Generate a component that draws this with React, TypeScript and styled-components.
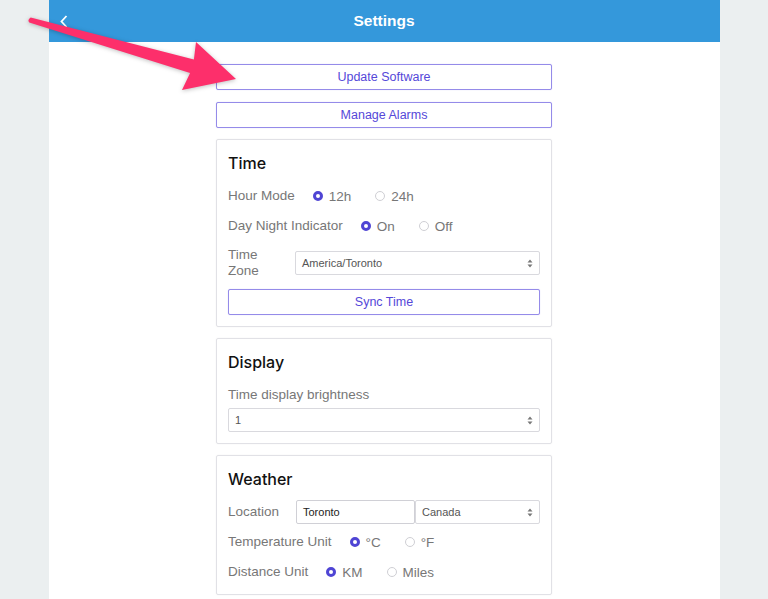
import styled, { createGlobalStyle } from 'styled-components';

const GlobalStyle = createGlobalStyle`
  html, body {
    margin: 0;
    padding: 0;
    background: #ebeff0;
    font-family: "Liberation Sans", Arial, sans-serif;
  }
`;

const Page = styled.div`
  position: relative;
  min-height: 599px;
`;

const Panel = styled.div`
  width: 671px;
  min-height: 599px;
  margin: 0 auto;
  background: #ffffff;
`;

const Header = styled.header`
  height: 42px;
  background: #3498db;
  display: grid;
  grid-template-columns: 40px 1fr 40px;
  align-items: center;
  color: #fff;
`;

const BackButton = styled.button`
  border: none;
  background: none;
  padding: 0 0 0 11px;
  display: flex;
  align-items: center;
  cursor: pointer;
`;

const Title = styled.h1`
  margin: 0;
  text-align: center;
  font-size: 15.5px;
  font-weight: 600;
`;

const Content = styled.main`
  width: 336px;
  margin: 22px auto 0;
  display: flex;
  flex-direction: column;
  gap: 11px;
  padding-bottom: 20px;
`;

const OutlineButton = styled.button<{ $top?: number }>`
  height: 26px;
  width: 100%;
  flex: none;
  box-sizing: border-box;
  border: 1px solid #958be9;
  border-radius: 2px;
  background: #fff;
  color: #5548d9;
  font-family: inherit;
  font-size: 12.5px;
  box-shadow: 0 0 1px rgba(120, 110, 230, 0.4);
  cursor: pointer;
  margin-top: ${(p) => p.$top ?? 0}px;
`;

const Card = styled.section<{ $bottom?: number }>`
  border: 1px solid #e1e1e6;
  border-radius: 2px;
  box-shadow: 0 0 2px rgba(0, 0, 0, 0.05);
  padding: 12px 11px ${(p) => p.$bottom ?? 11}px;
  display: flex;
  flex-direction: column;
`;

const CardTitle = styled.h2`
  margin: 0 0 7px;
  font-family: Inter, "Liberation Sans", sans-serif;
  font-size: 16px;
  font-weight: 500;
  color: #111;
  line-height: 22px;
`;

const Row = styled.div<{ $height?: number }>`
  display: flex;
  align-items: center;
  min-height: ${(p) => p.$height ?? 30}px;
  color: #777;
  font-size: 13.5px;
`;

const Label = styled.span<{ $width?: number }>`
  color: #777;
  font-size: 13.5px;
  line-height: 16px;
  margin-right: 18px;
  ${(p) => (p.$width ? `width: ${p.$width}px; flex: none; margin-right: 0;` : '')}
`;

const Option = styled.label`
  display: flex;
  align-items: center;
  margin-right: 24px;
  color: #777;
  font-size: 13.5px;
`;

const RadioDot = styled.span<{ $checked?: boolean }>`
  width: 10px;
  height: 10px;
  box-sizing: border-box;
  border-radius: 50%;
  margin-right: 6px;
  background: #fff;
  border: ${(p) => (p.$checked ? '3px solid #4f45d4' : '1px solid #cfcfd4')};
`;

const SelectBox = styled.div<{ $grow?: boolean }>`
  height: 24px;
  flex: ${(p) => (p.$grow ? '1' : 'none')};
  box-sizing: border-box;
  border: 1px solid #d9d9de;
  border-radius: 2px;
  display: flex;
  align-items: center;
  justify-content: space-between;
  padding: 0 6px;
  font-size: 11px;
  color: #555;
  background: #fff;
`;

const TextInput = styled.div`
  height: 24px;
  width: 119px;
  flex: none;
  box-sizing: border-box;
  border: 1px solid #d0d0d6;
  border-radius: 2px;
  display: flex;
  align-items: center;
  padding: 0 6px;
  font-size: 11px;
  color: #222;
`;

const FieldLabel = styled.div`
  color: #777;
  font-size: 13.5px;
  line-height: 16px;
  margin: 7px 0 5px;
`;

const Arrow = styled.svg`
  position: absolute;
  left: 0;
  top: 0;
  pointer-events: none;
  filter: drop-shadow(0 1px 2px rgba(0, 0, 0, 0.25));
`;

function SelectArrows() {
  return (
    <svg width="6" height="9" viewBox="0 0 6 9">
      <path d="M3 0.5 L5.5 3.5 H0.5 Z M3 8.5 L5.5 5.5 H0.5 Z" fill="#777" />
    </svg>
  );
}

function Select({ value, grow }: { value: string; grow?: boolean }) {
  return (
    <SelectBox $grow={grow}>
      <span>{value}</span>
      <SelectArrows />
    </SelectBox>
  );
}

function Radio({ label, checked }: { label: string; checked?: boolean }) {
  return (
    <Option>
      <RadioDot $checked={checked} />
      {label}
    </Option>
  );
}

export default function App() {
  return (
    <Page>
      <GlobalStyle />
      <Panel>
        <Header>
          <BackButton aria-label="Back">
            <svg width="8" height="13" viewBox="0 0 8 13">
              <path d="M6.5 1 L1.5 6.5 L6.5 12" fill="none" stroke="#fff" strokeWidth="1.8" />
            </svg>
          </BackButton>
          <Title>Settings</Title>
          <span />
        </Header>

        <Content>
          <OutlineButton>Update Software</OutlineButton>
          <OutlineButton $top={1}>Manage Alarms</OutlineButton>

          <Card>
            <CardTitle>Time</CardTitle>
            <Row>
              <Label>Hour Mode</Label>
              <Radio label="12h" checked />
              <Radio label="24h" />
            </Row>
            <Row>
              <Label>Day Night Indicator</Label>
              <Radio label="On" checked />
              <Radio label="Off" />
            </Row>
            <Row $height={44}>
              <Label $width={67}>
                Time
                <br />
                Zone
              </Label>
              <Select value="America/Toronto" grow />
            </Row>
            <OutlineButton $top={4}>Sync Time</OutlineButton>
          </Card>

          <Card>
            <CardTitle>Display</CardTitle>
            <FieldLabel>Time display brightness</FieldLabel>
            <Select value="1" />
          </Card>

          <Card $bottom={7}>
            <CardTitle>Weather</CardTitle>
            <Row>
              <Label $width={68}>Location</Label>
              <TextInput>Toronto</TextInput>
              <Select value="Canada" grow />
            </Row>
            <Row>
              <Label>Temperature Unit</Label>
              <Radio label="°C" checked />
              <Radio label="°F" />
            </Row>
            <Row>
              <Label>Distance Unit</Label>
              <Radio label="KM" checked />
              <Radio label="Miles" />
            </Row>
          </Card>
        </Content>
      </Panel>

      <Arrow width="260" height="100" viewBox="0 0 260 100">
        <path
          d="M30.7 17.4 L193.9 59.6 L196 42 L236 79 L182 90 L190.1 73 L29.3 22.6 Q27 20 30.7 17.4 Z"
          fill="#fd2f6b"
        />
      </Arrow>
    </Page>
  );
}
